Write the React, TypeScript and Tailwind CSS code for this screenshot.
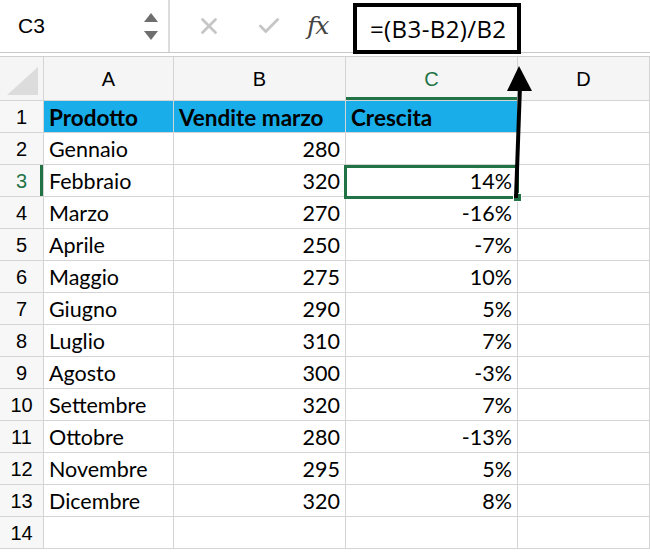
import { X, Check } from "lucide-react";

const rows: [string, string, string][] = [
  ["Gennaio", "280", ""],
  ["Febbraio", "320", "14%"],
  ["Marzo", "270", "-16%"],
  ["Aprile", "250", "-7%"],
  ["Maggio", "275", "10%"],
  ["Giugno", "290", "5%"],
  ["Luglio", "310", "7%"],
  ["Agosto", "300", "-3%"],
  ["Settembre", "320", "7%"],
  ["Ottobre", "280", "-13%"],
  ["Novembre", "295", "5%"],
  ["Dicembre", "320", "8%"],
  ["", "", ""],
];

const cell = "h-[32px] border-r border-b border-[#d4d4d4] flex items-center overflow-hidden whitespace-nowrap";
const sheetFont = "font-['Lato','Liberation_Sans',sans-serif] text-[21.5px] text-black pt-[2px]";
const headFont = "font-['Lato','Liberation_Sans',sans-serif] text-[22.5px] text-black font-bold pt-[2px]";
const uiFont = "font-['Liberation_Sans',Arial,sans-serif]";

function RowHead({ n, active }: { n: number; active?: boolean }) {
  return (
    <div
      className={`${cell} ${uiFont} justify-center bg-[#f7f7f7] text-[20px] relative ${
        active ? "text-[#217346]" : "text-black"
      }`}
    >
      {n}
      {active && <div className="absolute right-0 top-0 bottom-0 w-[3px] bg-[#217346]" />}
    </div>
  );
}

export default function App() {
  return (
    <div className="relative w-[650px] h-[556px] overflow-hidden bg-white">
      {/* toolbar */}
      <div className="flex h-[53px] border-b border-[#c8c8c8] bg-white">
        <div className={`w-[168px] flex items-center justify-between pl-[18px] pr-[10px] ${uiFont}`}>
          <span className="text-[21px] text-black">C3</span>
          <div className="flex flex-col items-center gap-[9px]">
            <svg width="14" height="9" viewBox="0 0 14 9">
              <path d="M7 0 L14 9 L0 9 Z" fill="#6e6e6e" />
            </svg>
            <svg width="14" height="9" viewBox="0 0 14 9">
              <path d="M0 0 L14 0 L7 9 Z" fill="#6e6e6e" />
            </svg>
          </div>
        </div>
        <div className="w-[2px] bg-[#dcdcdc]" />
        <div className="flex items-center pl-[26px] gap-[34px] text-[#c6c6c6]">
          <X size={26} strokeWidth={2.6} />
          <Check size={26} strokeWidth={2.6} />
        </div>
        <div className="flex items-center pl-[25px] font-['DejaVu_Serif','Liberation_Serif',serif] italic text-[25px] text-[#444] tracking-[-1px]">
          fx
        </div>
      </div>
      <div className="h-[4px] border-b border-[#d0d0d0] bg-white" />

      {/* grid */}
      <div className="grid grid-cols-[44px_130px_172px_172px_1fr]">
        <div className="h-[44px] border-r border-b border-[#d4d4d4] bg-[#f5f5f5] flex items-end justify-end pr-[5px] pb-[5px]">
          <svg width="31" height="28" viewBox="0 0 31 28">
            <path d="M31 0 L31 28 L0 28 Z" fill="#dcdcdc" />
          </svg>
        </div>
        {["A", "B", "C", "D"].map((c) => (
          <div
            key={c}
            className={`h-[44px] border-r border-b border-[#d4d4d4] bg-[#f5f5f5] flex items-center justify-center text-[20px] relative ${uiFont} ${
              c === "C" ? "text-[#217346]" : "text-black"
            }`}
          >
            {c}
            {c === "C" && <div className="absolute left-0 right-0 bottom-0 h-[3px] bg-[#217346]" />}
          </div>
        ))}

        <RowHead n={1} />
        <div className={`${cell} ${headFont} bg-[#19aeea] pl-[5px]`}>Prodotto</div>
        <div className={`${cell} ${headFont} bg-[#19aeea] pl-[5px]`}>Vendite marzo</div>
        <div className={`${cell} ${headFont} bg-[#19aeea] pl-[5px]`}>Crescita</div>
        <div className={cell} />

        {rows.map((r, i) => (
          <div key={i} className="contents">
            <RowHead n={i + 2} active={i === 1} />
            <div className={`${cell} ${sheetFont} pl-[5px]`}>{r[0]}</div>
            <div className={`${cell} ${sheetFont} justify-end pr-[5px]`}>{r[1]}</div>
            <div className={`${cell} ${sheetFont} justify-end pr-[5px]`}>{r[2]}</div>
            <div className={cell} />
          </div>
        ))}
      </div>

      {/* selected cell C3 */}
      <div className="absolute left-[344px] top-[165px] w-[175px] h-[34px] border-[3px] border-[#217346]" />
      <div className="absolute left-[513px] top-[193px] w-[9px] h-[9px] bg-[#217346] border border-white" />

      {/* annotation: formula box + arrow */}
      <div className="absolute left-[353px] top-[3px] w-[168px] h-[51px] border-[4px] border-black bg-white flex items-center pl-[13px] text-[24px] tracking-[0.4px] text-black font-['Open_Sans','Liberation_Sans',sans-serif]">
        =(B3-B2)/B2
      </div>
      <svg className="absolute left-0 top-0" width="650" height="556" viewBox="0 0 650 556">
        <line x1="516" y1="198" x2="520" y2="86" stroke="#000" strokeWidth="4" />
        <path d="M519 66 L532 91 L507 91 Z" fill="#000" />
      </svg>
    </div>
  );
}
